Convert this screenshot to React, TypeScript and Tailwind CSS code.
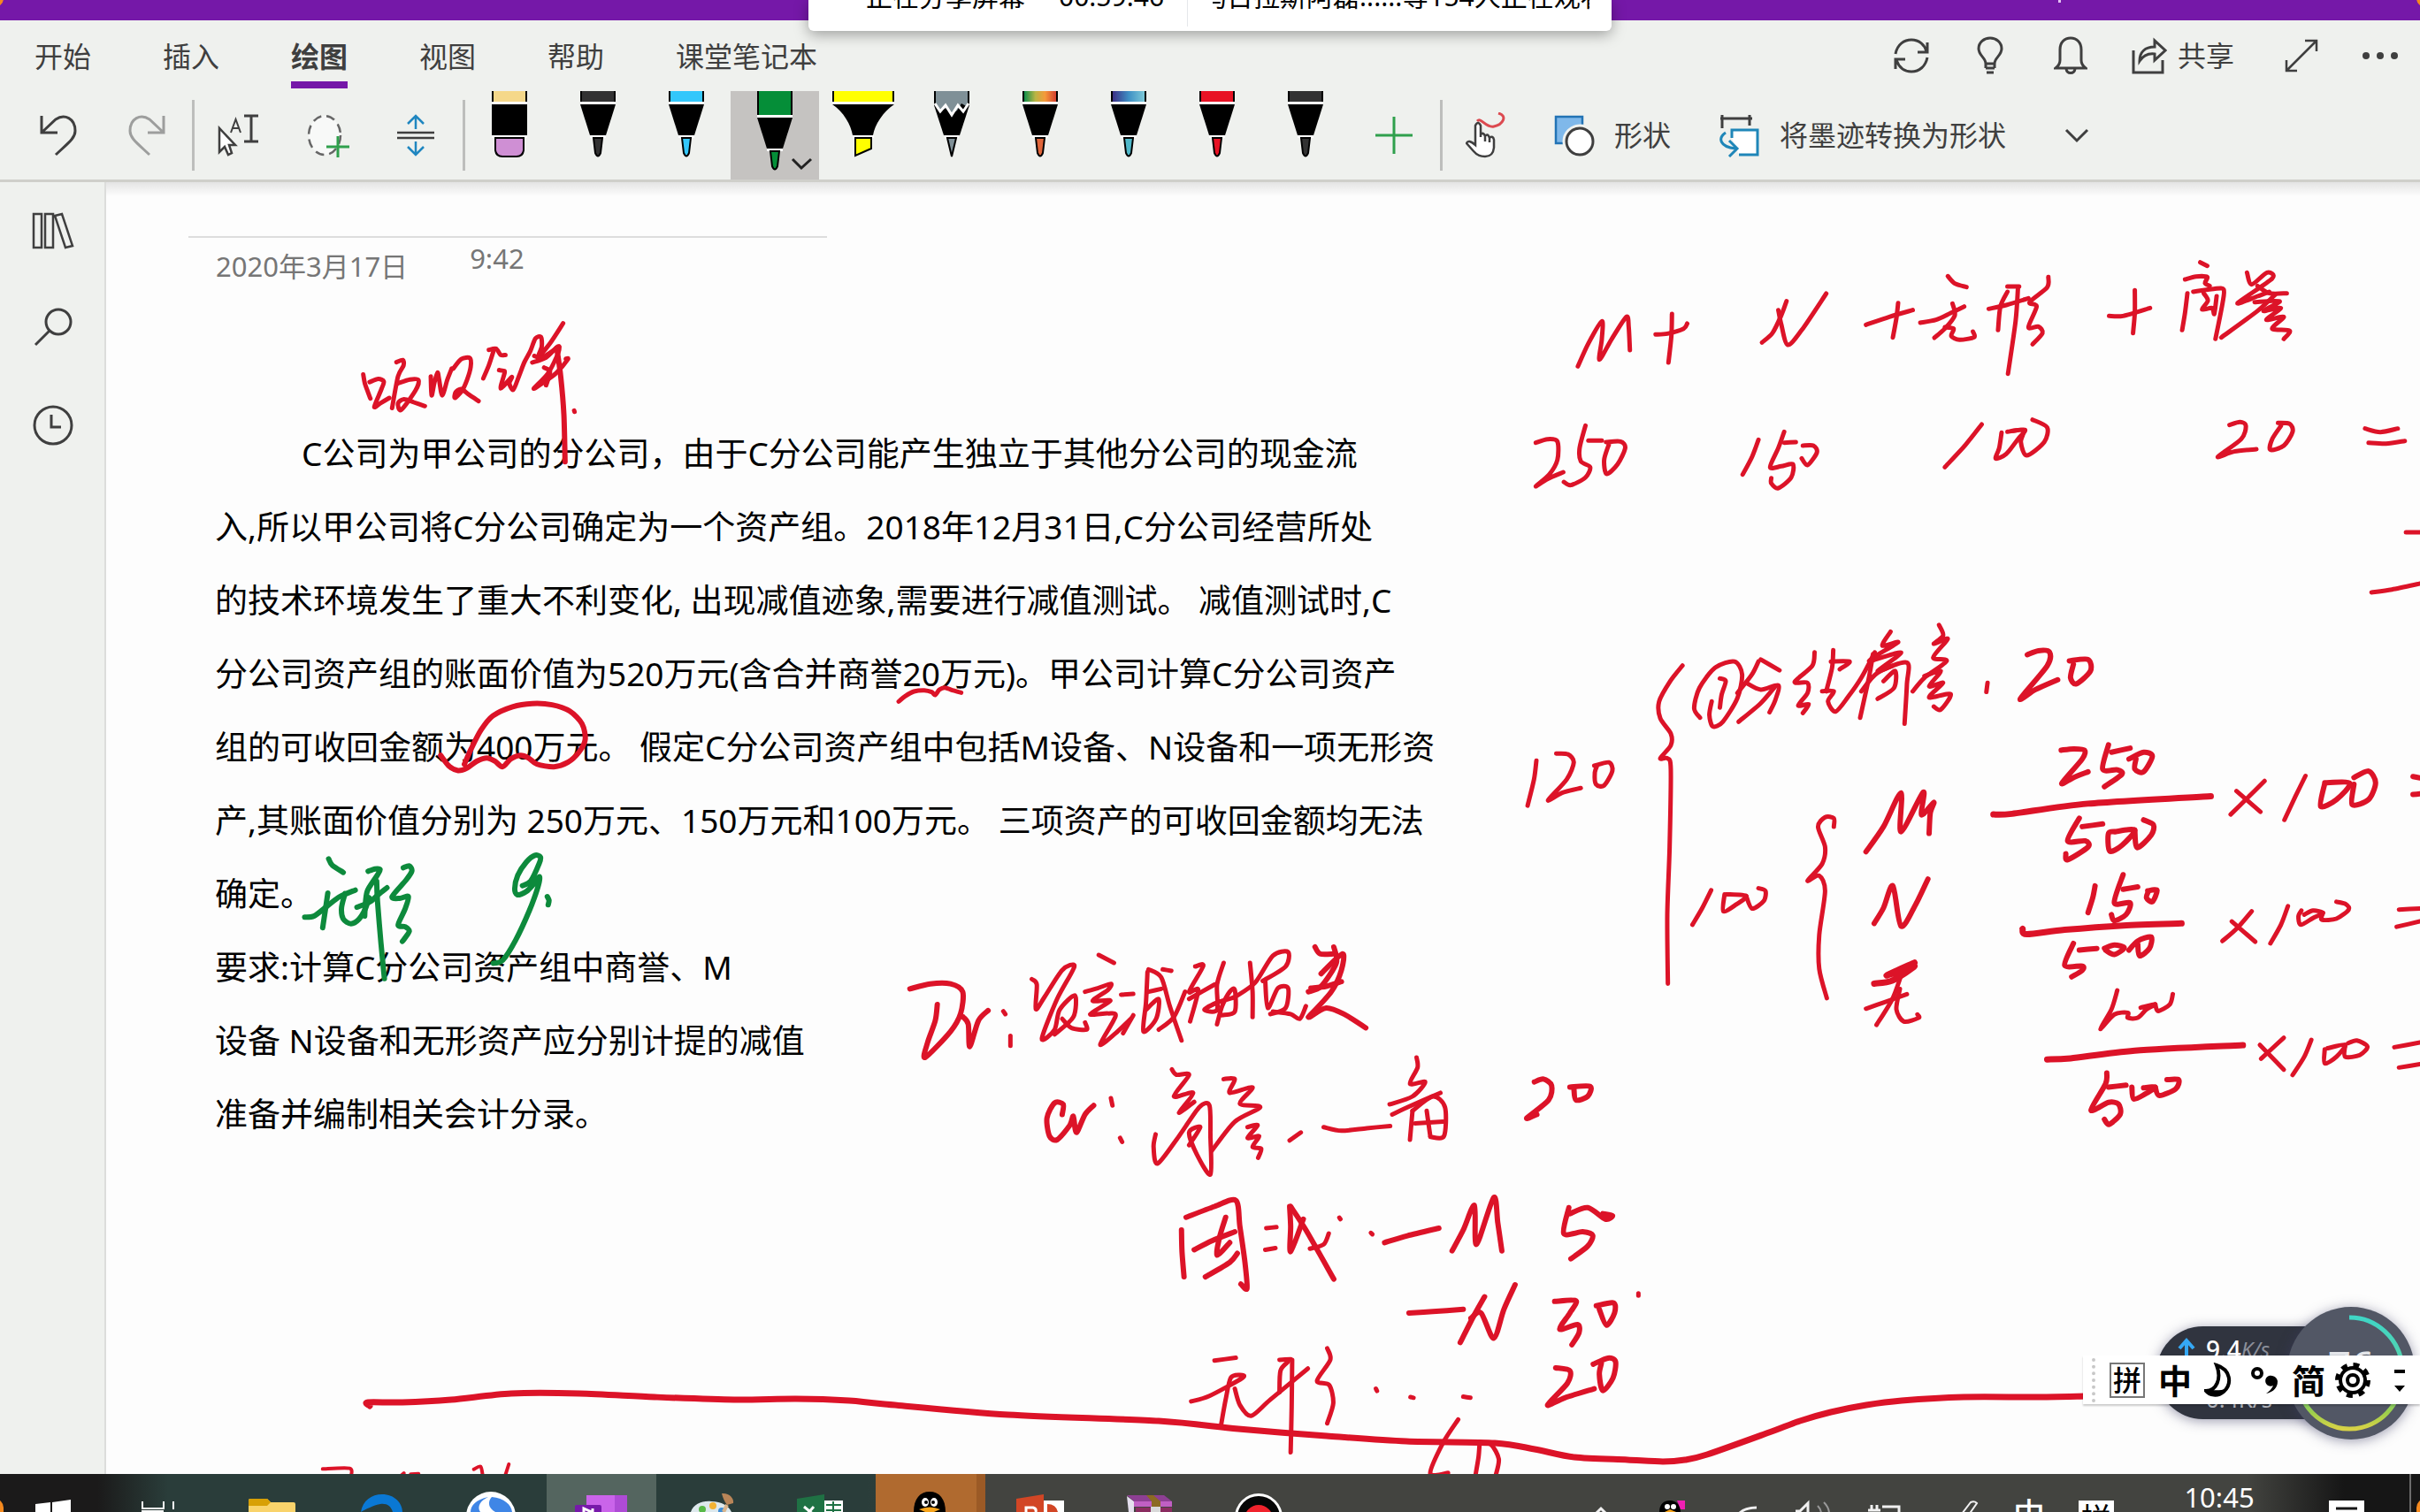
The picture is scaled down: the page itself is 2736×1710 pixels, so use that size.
import React from "react";

/* ---------- handwriting ink ---------- */

type InkGroup = {
  x: number;
  y: number;
  sx: number;
  sy: number;
  color: string;
  width: number;
  strokes: string[];
};

const RED = "#dc1328";
const GREEN = "#0d8a3c";

// Turns a list of "x,y" points into a smooth curve through every point.
function smooth(points: string): string {
  const p = points.split(" ").map((s) => s.split(",").map(Number));
  let d = `M${p[0][0]} ${p[0][1]}`;
  for (let i = 0; i < p.length - 1; i++) {
    const a = p[Math.max(i - 1, 0)];
    const b = p[i];
    const c = p[i + 1];
    const e = p[Math.min(i + 2, p.length - 1)];
    const k = 7;
    d += `C${b[0] + (c[0] - a[0]) / k} ${b[1] + (c[1] - a[1]) / k} ${c[0] - (e[0] - b[0]) / k} ${c[1] - (e[1] - b[1]) / k} ${c[0]} ${c[1]}`;
  }
  return d;
}

const ink: InkGroup[] = [
  {
    x: 200, y: 340, sx: 700 / 1568, sy: 560 / 1568, color: RED, width: 5,
    strokes: [
      "472,234 476,262 484,290 490,310",
      "488,258 510,248 524,256 518,280 500,336 515,325 538,308",
      "556,195 572,188 574,205 560,240 545,340",
      "560,262 590,250 612,252 604,285 568,346 560,325 575,312 600,322 628,334",
      "643,240 645,300 652,260 660,228 664,250 672,300 685,250 696,215",
      "700,215 720,185 742,182 744,210 735,250 722,285 704,308 706,290 720,280 740,298 764,318",
      "776,246 790,205 803,155",
      "790,156 808,152 820,172 832,172",
      "816,220 826,222 830,228 820,278 848,242 842,262 852,282 866,240 880,195 895,160 908,120 922,115 924,145 916,176 945,135 978,72",
      "900,196 935,180 965,145 966,165 940,230 904,278 925,262 960,230 990,186 985,184",
      "930,212 945,225 935,268",
      "905,175 925,180 968,145",
      "1006,348 1007,352",
    ],
  },
  {
    x: 200, y: 340, sx: 700 / 1568, sy: 560 / 1568, color: RED, width: 6,
    strokes: [
      "962,150 972,240 980,360 983,510",
      "668,1440 690,1475 712,1488 735,1480 760,1458 785,1448 805,1458 825,1476 845,1452 870,1440 890,1448 912,1468 955,1476 990,1462 1018,1430 1034,1390 1026,1340 995,1300 950,1280 900,1276 850,1286 800,1315 770,1360 745,1420 728,1468",
    ],
  },
  {
    x: 960, y: 700, sx: 1 / 3, sy: 1 / 3, color: RED, width: 5,
    strokes: ["168,280 190,262 220,246 255,242 280,248 292,258 306,240 325,233 350,242 380,250"],
  },
  {
    x: 200, y: 940, sx: 760 / 1568, sy: 1 / 3, color: GREEN, width: 6,
    strokes: [
      "354,94 362,115 388,140",
      "298,292 320,288 350,255 380,222 416,200",
      "352,210 346,270 340,328",
      "392,212 384,260 388,298 406,314 425,298 440,262 448,225",
      "446,136 462,128 474,130 468,148 445,200 440,240 438,288",
      "420,258 450,240 470,215 490,192",
      "466,170 468,240 476,380 484,500",
      "528,124 542,118 548,135 535,165 502,222 520,228 540,222 532,265 516,318 532,324 542,340 526,374",
      "806,185 825,170 845,110 848,88 835,82 815,105 795,150 788,195 794,216 815,205 835,175 846,155 842,190 822,270 790,370 760,438 738,448",
      "864,222 868,235 866,250",
    ],
  },
  {
    x: 1700, y: 280, sx: 1036 / 1568, sy: 1 / 3, color: RED, width: 5,
    strokes: [
      "127,403 145,325 168,250 168,310 164,380 185,310 210,235 214,270 216,348",
      "260,295 280,292 308,275 314,258",
      "288,225 287,300 282,390",
      "442,322 460,290 475,230 484,182",
      "470,212 475,260 486,330 510,280 552,156",
      "620,262 660,235 700,212",
      "675,188 672,240 666,305",
      "760,97 772,122 792,134",
      "713,255 740,245 765,222 788,200",
      "768,190 772,230 755,275 737,306",
      "755,270 770,275 766,300 780,313 805,304 803,285",
      "862,132 882,132",
      "830,208 860,195 898,172",
      "862,150 850,200 846,280",
      "880,140 876,250 863,428",
      "932,100 930,135 900,185 912,200 898,270 915,268 922,290 905,328",
      "1036,232 1060,232 1106,205",
      "1080,145 1080,220 1077,290",
      "1192,50 1204,62",
      "1166,108 1185,98 1204,100 1200,120 1208,130",
      "1170,155 1166,220 1161,280",
      "1180,150 1215,140 1232,142 1230,190 1218,310",
      "1198,155 1205,180 1195,210 1212,205 1216,225 1220,165",
      "1272,85 1280,125 1306,85 1315,105 1256,188 1290,165 1310,150",
      "1290,130 1310,155 1340,155",
      "1320,160 1290,215 1228,305",
      "1285,185 1328,182 1300,215 1330,205 1305,245 1335,235 1315,275 1345,282 1335,310",
      "55,662 75,650 92,658 92,720 78,770 55,810 75,785 102,762",
      "140,604 130,680 132,725 148,745 140,780 115,806 103,795",
      "145,655 168,655",
      "175,660 200,658 208,680 195,735 176,768 172,720 180,668",
      "436,652 425,710 409,770",
      "480,625 470,680 456,745 475,742 495,735 492,780 470,816 458,800 458,782",
      "480,662 500,660",
      "512,672 530,672 536,695 520,738 510,715",
      "818,600 790,670 755,745",
      "852,628 848,680 842,716 860,700 880,650 892,618 862,625",
      "870,622 890,620 885,660 895,705 925,660 930,610 905,584",
      "1242,602 1260,592 1270,605 1262,650 1222,710 1250,692 1288,684",
      "1325,595 1345,598 1350,625 1335,672 1312,686 1315,650 1330,605",
      "1474,614 1500,626 1530,614",
      "1480,662 1510,665 1542,656",
      "1544,966 1568,966",
      "1485,1170 1520,1160 1568,1140",
    ],
  },
  {
    x: 1700, y: 690, sx: 1036 / 1568, sy: 600 / 1568, color: RED, width: 5,
    strokes: [
      "306,164 285,210 266,270 268,320 286,365 286,400 268,438 280,438 286,470 284,700 280,900 281,1104",
      "56,445 52,500 41,578",
      "90,424 110,426 120,450 108,500 76,562 100,540 132,526",
      "155,460 180,450 186,475 172,518 158,515 156,480 160,460",
      "336,318 326,290 335,230 362,170 395,152 408,190 400,260 375,330 358,344 352,310 356,270",
      "370,202 380,210 373,250 370,288",
      "440,146 472,178",
      "436,152 425,190 400,245",
      "415,215 440,235 470,222 465,265 455,302",
      "465,225 440,275 402,330",
      "532,125 528,165 498,212 520,215 520,245 504,282 522,278 512,304",
      "564,118 562,170 552,240",
      "560,152 592,152 575,175",
      "545,240 565,240 555,270 568,300 590,255 612,200 635,125",
      "662,64 648,105 675,95 625,150 680,125 640,180 665,165",
      "632,130 625,200 610,318",
      "612,240 640,185 690,155 690,220 686,336",
      "650,210 670,180 668,230 640,262",
      "745,44 752,75 736,100 760,85 735,140 758,150 720,200 700,240",
      "720,195 748,180 728,225 752,215 728,258 765,248 748,294 736,285",
      "828,215 826,242",
      "1302,505 1270,560 1244,604",
      "1254,535 1295,596",
      "1372,490 1355,550 1336,620",
      "565,640 565,615 550,612 538,640 550,700 545,750 520,800 540,785 550,830 540,960 540,1060 553,1147",
      "355,828 340,880 323,930",
      "378,840 376,890 398,870 415,845 380,840",
      "415,845 425,882 445,860 448,830 436,822",
      "1280,890 1255,940 1230,978",
      "1246,920 1286,980",
      "1342,875 1330,930 1312,985",
      "1365,888 1360,905 1364,930 1385,910 1402,895 1385,888 1370,900",
      "1402,895 1400,915 1425,912 1446,885 1440,868 1425,862",
      "1532,885 1568,882",
      "1528,936 1568,920",
      "620,1178 650,1160 690,1135",
      "680,1080 665,1150 638,1226",
      "678,1120 672,1180 685,1216 710,1205 708,1195",
      "1050,1124 1040,1180 1021,1238 1045,1195 1068,1190 1068,1205 1085,1205 1100,1180 1115,1165 1090,1175",
      "1115,1165 1120,1185 1140,1165 1145,1135",
      "1335,1264 1296,1326",
      "1294,1285 1335,1358",
      "1382,1270 1370,1320 1350,1374",
      "1405,1298 1405,1340 1425,1320 1440,1285 1410,1295",
      "1440,1285 1440,1320 1465,1315 1478,1290 1460,1272 1445,1280",
      "1524,1292 1568,1278",
      "1532,1352 1568,1342",
    ],
  },
  {
    x: 1700, y: 690, sx: 1036 / 1568, sy: 600 / 1568, color: RED, width: 6,
    strokes: [
      "896,132 915,120 934,124 930,165 884,262 910,235 948,206",
      "968,150 1000,146 1004,180 980,218 970,200 975,160",
      "954,414 975,410 994,414 990,440 955,512 975,495 1000,478",
      "1035,398 1025,470 1050,472 1058,485 1028,522",
      "1040,420 1072,408",
      "1070,440 1095,420 1110,432 1095,478 1080,470 1082,440",
      "985,615 965,682 995,682 1000,700 965,738 962,720",
      "990,640 1025,632",
      "1048,655 1035,660 1037,712 1058,695 1080,650 1045,655",
      "1080,650 1084,702 1108,665 1112,635 1095,620",
      "1405,512 1398,580 1425,560 1448,512 1405,510",
      "1455,515 1452,575 1480,560 1492,510 1480,476 1455,495",
      "1556,492 1568,496",
      "1556,545 1568,543",
      "620,714 650,640 680,540 680,655 718,538 715,605 736,568 730,600 728,660",
      "634,926 650,880 666,815 680,934 705,870 726,795",
      "1012,815 1008,850 1000,894",
      "1060,782 1045,865 1072,865 1065,900 1045,918 1040,900",
      "1060,825 1085,818",
      "1102,830 1118,828 1110,862 1100,850 1103,832",
      "975,985 960,1050 990,1052 990,1065 972,1084",
      "985,1005 1015,1000",
      "1028,1000 1045,990 1062,998 1045,1018 1030,1005",
      "1070,1005 1085,978 1108,966 1105,1000 1088,1022 1085,985",
      "1032,1368 1030,1400 1005,1478 1035,1455 1052,1460 1055,1490 1036,1520 1028,1505",
      "1035,1410 1065,1404",
      "1075,1410 1078,1445 1098,1430 1115,1410 1095,1412",
      "1115,1410 1122,1435 1150,1415 1155,1388 1135,1388",
    ],
  },
  {
    x: 1700, y: 690, sx: 1036 / 1568, sy: 600 / 1568, color: RED, width: 7,
    strokes: [
      "838,604 870,602 1000,572 1210,550",
      "888,942 895,958 960,945 1060,932 1160,926",
      "930,1328 970,1325 1080,1302 1265,1286",
      "634,1104 665,1095 703,1052 655,1080 703,1042",
    ],
  },
  {
    x: 1000, y: 1040, sx: 900 / 1568, sy: 640 / 1568, color: RED, width: 5,
    strokes: [
      "234,254 238,262",
      "248,322 248,350",
      "290,165 300,180 298,248 315,215 350,140 374,130 340,220 310,330 335,305 345,250 375,210 372,270 335,318",
      "350,275 368,300 398,305 395,285",
      "422,98 452,120",
      "395,200 420,190 446,178 440,195 410,225 445,225 405,262 440,260 455,268 425,346 455,315 485,275",
      "466,208 490,206",
      "470,315 490,265",
      "518,145 515,230 510,310 535,275 540,220 515,250",
      "520,138 545,160 562,240 585,335",
      "520,200 545,192",
      "592,200 570,270 540,305",
      "548,138 565,142",
      "612,130 628,128 600,200 618,195 602,282",
      "600,220 650,180",
      "668,120 655,180 655,250 630,250 655,230 690,215",
      "655,290 665,240 680,200 690,195 690,255 665,265",
      "720,120 725,200 725,270",
      "690,215 730,175 765,100 795,90 790,130 745,170",
      "750,170 755,245 775,190 795,190 790,245 760,262",
      "765,255 800,262 818,275 830,240",
      "446,495 449,515",
      "464,605 468,616",
      "566,415 575,430 600,430 570,490 608,480 580,535 610,505",
      "534,595 530,630 538,676 580,600 620,520 640,515 642,600 642,706 615,650 600,590 622,575 600,625",
      "668,442 690,442 680,480 725,465 700,510 740,520 690,560 645,640",
      "715,575 735,570 715,605 738,600 725,630 742,635 736,660",
      "798,612 820,590",
      "865,575 900,585 950,578 996,572",
      "1048,382 1050,410 1035,455 1065,450 1040,490 995,512",
      "1000,540 1030,520 1095,480",
      "1040,530 1035,610",
      "1040,530 1080,490 1104,520 1102,600 1075,602",
      "1068,530 1075,600",
      "1045,565 1100,560",
      "752,855 772,852",
      "750,915 770,910",
      "838,912 865,900 875,870",
      "896,826 898,830",
      "958,868 961,872",
      "1485,1036 1485,1042",
      "650,1222 692,1214",
      "604,1335 640,1320 705,1270 700,1262 682,1270 672,1330 663,1400",
      "690,1300 700,1345 722,1375 760,1330 834,1244",
      "778,1220 800,1218",
      "795,1225 780,1250 778,1310",
      "803,1220 802,1350 800,1476",
      "872,1188 878,1220 852,1278 876,1290 884,1340 872,1396",
      "968,1300 970,1306",
      "1036,1323 1042,1325",
      "1140,1322 1154,1325",
      "1130,1385 1100,1450 1075,1535 1110,1533",
      "1172,1455 1170,1490 1164,1540",
      "1172,1448 1195,1455 1210,1495 1204,1540",
    ],
  },
  {
    x: 1000, y: 1040, sx: 900 / 1568, sy: 640 / 1568, color: RED, width: 6,
    strokes: [
      "50,192 90,178 130,178 154,200 150,260 130,310 80,382 85,340 100,280 104,235",
      "155,270 165,290 168,352 185,280 204,252",
      "848,76 858,95 885,95",
      "885,76 890,120 860,185 835,200",
      "860,150 902,95 900,140 880,200 835,270",
      "838,270 870,245 905,262 948,300",
      "840,190 870,185 900,172",
      "350,540 352,512 335,508 320,550 325,600 340,610 365,570 372,545 378,590 395,540 412,515",
      "1280,450 1298,442 1314,460 1308,500 1265,550 1285,540",
      "1350,464 1390,462 1385,490 1362,500 1358,470",
      "585,860 586,920 590,990",
      "594,825 650,795 692,778 700,850 710,950 714,1022 702,1010",
      "610,915 645,890 690,865",
      "672,825 660,880 655,930 680,895",
      "695,925 680,950 632,990",
      "798,795 800,850 800,920 825,830",
      "800,795 830,860 885,996",
      "985,895 1030,876 1092,855",
      "1118,918 1140,860 1162,792 1166,900 1200,770 1208,840 1216,918",
      "1348,798 1338,870 1375,865 1395,875 1385,905 1352,940",
      "1350,815 1385,798 1420,830 1434,820 1415,815",
      "1033,1090 1080,1086 1140,1080",
      "1134,1172 1160,1100 1182,1045",
      "1155,1105 1175,1090 1200,1160 1220,1080 1242,1012",
      "1320,1058 1362,1056 1350,1090 1330,1135 1365,1122 1368,1145 1354,1178",
      "1402,1070 1436,1062 1438,1090 1422,1124 1408,1080",
      "1322,1242 1350,1250 1345,1285 1306,1345 1340,1325 1398,1300",
      "1396,1232 1425,1215 1440,1225 1435,1270 1415,1305 1408,1260 1412,1230",
    ],
  },
  {
    x: 0, y: 0, sx: 1, sy: 1, color: RED, width: 7,
    strokes: [
      "418,1590 416,1586 455,1586 510,1583 578,1576 655,1576 740,1580 830,1583 900,1582 960,1584 1000,1588 1140,1600 1310,1607 1400,1616 1500,1624 1590,1630 1690,1632 1735,1639 1780,1648 1840,1651 1880,1653 1905,1651 1930,1645 2000,1620 2035,1607 2070,1597 2110,1589 2150,1584 2220,1580 2300,1580 2358,1579",
    ],
  },
  {
    x: 0, y: 1480, sx: 1000 / 1568, sy: 1 / 3, color: RED, width: 4,
    strokes: ["572,544 620,542 622,570", "710,568 716,558", "728,562 742,560", "840,545 852,536 856,570", "902,528 895,570"],
  },
];

function InkLayer() {
  return (
    <svg className="pointer-events-none absolute left-0 top-0 h-[1461px] w-[2616px]" viewBox="120 206 2616 1461" fill="none" aria-hidden="true">
      {ink.map((g, i) => (
        <g key={i} transform={`translate(${g.x} ${g.y}) scale(${g.sx} ${g.sy})`} stroke={g.color} strokeWidth={g.width} strokeLinecap="round" strokeLinejoin="round">
          {g.strokes.map((s, j) => (
            <path key={j} d={smooth(s)} vectorEffect="non-scaling-stroke" />
          ))}
        </g>
      ))}
    </svg>
  );
}

/* ---------- ribbon ---------- */

const tabs = ["开始", "插入", "绘图", "视图", "帮助", "课堂笔记本"];

function Icon({ w, h, children, label, sw = 3 }: { w: number; h: number; children: React.ReactNode; label?: string; sw?: number }) {
  return (
    <svg width={w} height={h} viewBox={`0 0 ${w} ${h}`} fill="none" stroke="#3f3f3f" strokeWidth={sw} aria-label={label} aria-hidden={label ? undefined : true} className="shrink-0">
      {children}
    </svg>
  );
}

function TopActions() {
  const btn = "flex items-center justify-center";
  return (
    <div className="ml-auto flex items-center pr-6">
      <button className={btn} aria-label="同步">
        <Icon w={42} h={42}>
          <path d="M3 19C5 8 13 3 21 3C30 3 36 9 38 16M39 6V17H28M39 23C37 33 30 39 21 39C12 39 7 34 4 26M3 36V25H14" />
        </Icon>
      </button>
      <button className={btn + " ml-[52px]"} aria-label="操作说明">
        <Icon w={32} h={44}>
          <path d="M11 31C11 24 3 22 3 14C3 7 9 2 16 2S29 7 29 14C29 22 21 24 21 31ZM11 36H21M12 41H20M11 31V36M21 31V36" />
        </Icon>
      </button>
      <button className={btn + " ml-[56px]"} aria-label="通知">
        <Icon w={38} h={44}>
          <path d="M2 36C6 33 7 31 7 27V15C7 7 12 2 19 2S31 7 31 15V27C31 31 32 33 36 36ZM14 37C15 43 23 43 24 37" />
        </Icon>
      </button>
      <button className="ml-[50px] flex items-center gap-3 text-[32px] leading-10">
        <Icon w={40} h={42}>
          <path d="M2 15V40H35V26M9 27C9 17 15 11 26 11V4L38 15L26 26V19C18 18 13 21 9 27Z" />
        </Icon>
        共享
      </button>
      <button className={btn + " ml-[56px]"} aria-label="全屏">
        <Icon w={40} h={40}>
          <path d="M3 37L37 3M24 3H37V15M3 25V37H15" strokeWidth="2.5" />
        </Icon>
      </button>
      <button className={btn + " ml-[48px]"} aria-label="更多">
        <Icon w={42} h={10}>
          <g fill="#3f3f3f" stroke="none">
            <circle cx="5" cy="5" r="4" />
            <circle cx="21" cy="5" r="4" />
            <circle cx="37" cy="5" r="4" />
          </g>
        </Icon>
      </button>
    </div>
  );
}

type PenSpec = { name: string; fill: string; tip?: string; kind?: "eraser" | "highlighter" | "pencil"; selected?: boolean };

const pens: PenSpec[] = [
  { name: "橡皮擦", fill: "#f5d88a", kind: "eraser" },
  { name: "黑色笔", fill: "#323232" },
  { name: "蓝色笔", fill: "#33c7fb" },
  { name: "绿色笔", fill: "#058e38", selected: true },
  { name: "黄色荧光笔", fill: "#ffff00", kind: "highlighter" },
  { name: "铅笔", fill: "#7f9097", kind: "pencil" },
  { name: "彩虹笔", fill: "url(#rainbow)", tip: "#e0653a" },
  { name: "星系笔", fill: "url(#galaxy)", tip: "#4fb8c9" },
  { name: "红色笔", fill: "#e81224" },
  { name: "黑色粗笔", fill: "#323232" },
];

function Pen({ pen }: { pen: PenSpec }) {
  const tip = pen.tip ?? pen.fill;
  let drawing: React.ReactNode;
  if (pen.kind === "eraser") {
    drawing = (
      <>
        <path d="M30 0H70V12H30Z" fill="#000" />
        <path d="M32 0H68V12H32Z" fill={pen.fill} />
        <path d="M30 12H70V15H30ZM30 50H70V53H30Z" fill="#fff" />
        <path d="M30 15H70V50H30Z" fill="#000" />
        <path d="M34 53H66V67Q65 74 58 74H42Q35 74 34 67Z" fill="#cf8fd4" stroke="#000" strokeWidth="2" />
      </>
    );
  } else if (pen.kind === "highlighter") {
    drawing = (
      <>
        <path d="M15 0H85V12H15Z" fill="#000" />
        <path d="M17 0H83V12H17Z" fill={pen.fill} />
        <path d="M15 12H85V15H15ZM38 50H62V53H38Z" fill="#fff" />
        <path d="M15 15H85C72 24 63 38 61 50H38C36 38 28 24 15 15Z" fill="#000" />
        <path d="M41 53H59V65L41 73Z" fill={pen.fill} stroke="#000" strokeWidth="2" />
      </>
    );
  } else if (pen.kind === "pencil") {
    drawing = (
      <>
        <path d="M30 0H70V16L59 50H41L30 16Z" fill="#000" />
        <path d="M32 0H68V18L61 14L56 22L50 26L44 19L38 22L32 16Z" fill={pen.fill} />
        <path d="M31 14L37 23L43 16L50 27L57 16L63 23L69 14" fill="none" stroke="#fff" strokeWidth="3" />
        <path d="M42 50H58V53H42Z" fill="#fff" />
        <path d="M45 53H55L50 74Z" fill={pen.fill} stroke="#000" strokeWidth="2" />
      </>
    );
  } else {
    drawing = (
      <>
        {pen.selected && (
          <>
            <path d="M30 0H70V15H30Z" fill="#000" />
            <path d="M32 0H68V15H32Z" fill={pen.fill} />
          </>
        )}
        <g transform={pen.selected ? "translate(0 15)" : undefined}>
          <path d="M30 0H70V12H30Z" fill="#000" />
          <path d="M32 0H68V12H32Z" fill={pen.fill} />
          <path d="M30 12H70V15H30ZM41 50H59V53H41Z" fill="#fff" />
          <path d="M30 15H70L59 50H41Z" fill="#000" />
          <path d="M45 53H55L53 70Q50 77 47 70Z" fill={tip} stroke="#000" strokeWidth="2" />
        </g>
        {pen.selected && <path d="M70 77L80 87L91 77" fill="none" stroke="#222" strokeWidth="3" />}
      </>
    );
  }
  return (
    <button aria-label={pen.name} aria-pressed={!!pen.selected} className={pen.selected ? "w-[100px] shrink-0 bg-[#c5c3c1]" : "w-[100px] shrink-0"}>
      <svg viewBox="0 0 100 100" className="block h-[100px] w-[100px]">
        <defs>
          <linearGradient id="rainbow">
            <stop offset="0" stopColor="#0f8f4b" />
            <stop offset="0.35" stopColor="#b9b544" />
            <stop offset="0.65" stopColor="#f59a3a" />
            <stop offset="1" stopColor="#d5402f" />
          </linearGradient>
          <linearGradient id="galaxy">
            <stop offset="0" stopColor="#3b2f86" />
            <stop offset="0.5" stopColor="#3f8fc4" />
            <stop offset="1" stopColor="#7cc9d8" />
          </linearGradient>
        </defs>
        {drawing}
      </svg>
    </button>
  );
}

function Separator({ className }: { className: string }) {
  return <div className={"mt-[10px] h-20 w-[3px] shrink-0 bg-[#bdbebc] " + className} />;
}

function Toolbar() {
  const cell = "flex h-[100px] w-[100px] shrink-0 items-center justify-center";
  return (
    <div className="flex h-[100px] pl-4">
      <button className={cell} aria-label="撤消">
        <Icon w={44} h={50}>
          <path d="M3 3V22H21M3 22L19 7C29 0 41 6 41 20C41 28 34 33 19 47" />
        </Icon>
      </button>
      <button className={cell} aria-label="恢复">
        <Icon w={44} h={50}>
          <path d="M41 3V22H23M41 22L25 7C15 0 3 6 3 20C3 28 10 33 25 47" stroke="#9d9e9d" />
        </Icon>
      </button>
      <Separator className="ml-px" />
      <button className={cell} aria-label="选择对象或键入文本">
        <Icon w={48} h={50} sw={2}>
          <path d="M2 17V44L8 38L12 47L16 45L13 36H20Z" fill="#fff" strokeWidth="2.5" />
          <path d="M15 22L20.500 7L26 22M17 17H24" />
          <path d="M30 3H46M30 32H46M38 3V32" strokeWidth="3" />
        </Icon>
      </button>
      <button className={cell} aria-label="套索选择">
        <Icon w={50} h={52}>
          <ellipse cx="22" cy="26" rx="18" ry="22" strokeDasharray="10 6" stroke="#666" fill="#f8f9f8" strokeWidth="2.500" />
          <path d="M24 39H50M37 27V51" stroke="#2fa04c" />
        </Icon>
      </button>
      <button className={cell} aria-label="插入空间">
        <Icon w={44} h={50}>
          <path d="M1 22H43M1 28H43" strokeWidth="2.500" />
          <path d="M22 18V3M13 12L22 3L31 12M22 32V47M13 38L22 47L31 38" stroke="#1f86c0" strokeWidth="2.500" />
        </Icon>
      </button>
      <Separator className="ml-[3px]" />
      {pens.map((p) => (
        <Pen key={p.name} pen={p} />
      ))}
      <button className={cell} aria-label="添加笔">
        <Icon w={44} h={44}>
          <path d="M1 22H43M22 1V43" stroke="#2fa04c" />
        </Icon>
      </button>
      <Separator className="ml-[2px]" />
      <button className={cell} aria-label="使用触摸绘图">
        <Icon w={48} h={52}>
          <path d="M13 10C18 5 22 18 32 16C42 14 48 4 37 1" stroke="#dc4a50" />
          <path d="M11 37V15Q14 9 17 15V28V25Q20 22 22 27Q25 23 27 29Q31 26 32 31V40Q31 50 22 50Q14 50 9 44L1 35Q3 30 11 37ZM22 27V33M27 29V34" fill="#fff" strokeWidth="2.500" />
        </Icon>
      </button>
      <button className="ml-[26px] flex shrink-0 items-center gap-[22px] text-[32px] leading-10">
        <Icon w={46} h={50}>
          <path d="M2 4H32V34H2Z" fill="#7fb8ea" stroke="#2273b5" strokeWidth="2.500" />
          <circle cx="29" cy="32" r="18" fill="#f0f2ef" stroke="#f0f2ef" />
          <circle cx="29" cy="32" r="15" fill="#fff" />
        </Icon>
        形状
      </button>
      <button className="ml-[53px] flex shrink-0 items-center gap-[22px] text-[32px] leading-10">
        <Icon w={48} h={50}>
          <path d="M3 6H39M5 2V17M36 2V14" />
          <path d="M16 28V19H45V47H24" fill="#fff" stroke="#1f86b8" />
          <path d="M9 22C0 28 2 38 20 40M13 31L22 40L13 49" stroke="#1f86b8" />
        </Icon>
        将墨迹转换为形状
      </button>
      <button className="ml-[60px] flex w-[40px] shrink-0 items-center justify-center" aria-label="更多选项">
        <Icon w={30} h={20}>
          <path d="M3 4L15 16L27 4" />
        </Icon>
      </button>
    </div>
  );
}

function SharingBar() {
  return (
    <div className="absolute left-1/3 top-0 z-20 ml-[2px] h-[35px] w-[908px] overflow-hidden rounded-b-md bg-white text-black shadow-[0_4px_16px_rgba(0,0,0,0.35)]">
      <div className="-mt-[26px] flex h-11 items-center whitespace-nowrap pl-[65px] text-[30px] leading-[44px]">
        <span>正在分享屏幕</span>
        <span className="ml-[38px]">00:59:46</span>
        <span className="ml-[26px] mt-6 h-11 w-px bg-gray-200" />
        <span className="ml-[28px] flex w-[426px] justify-start overflow-hidden">
          <span className="-ml-[14px]">乌日拉斯阿磊......等154人正在观看</span>
        </span>
      </div>
    </div>
  );
}

/* ---------- note ---------- */

const paragraph = [
  "入,所以甲公司将C分公司确定为一个资产组。2018年12月31日,C分公司经营所处",
  "的技术环境发生了重大不利变化, 出现减值迹象,需要进行减值测试。 减值测试时,C",
  "分公司资产组的账面价值为520万元(含合并商誉20万元)。甲公司计算C分公司资产",
  "组的可收回金额为400万元。 假定C分公司资产组中包括M设备、N设备和一项无形资",
  "产,其账面价值分别为 250万元、150万元和100万元。 三项资产的可收回金额均无法",
  "确定。",
  "要求:计算C分公司资产组中商誉、M",
  "设备 N设备和无形资产应分别计提的减值",
  "准备并编制相关会计分录。",
];

function Note() {
  return (
    <main className="relative flex-1 overflow-hidden bg-[#fdfdfd]">
      <div className="absolute inset-x-0 top-0 h-4 bg-gradient-to-b from-black/10 to-transparent" />
      <div className="ml-[93px] mt-[61px] w-[722px] border-t-2 border-[#dddddd]" />
      <div className="ml-[124px] flex text-[31px] leading-9 text-[#767676]">
        <span className="pt-[14px]">2020年3月17日</span>
        <span className="ml-[70px] pt-[5px]">9:42</span>
      </div>
      <article className="ml-[123px] mt-[152px] whitespace-nowrap text-[37px] leading-[83px] text-black">
        <p className="pl-[98px]">C公司为甲公司的分公司，由于C分公司能产生独立于其他分公司的现金流</p>
        {paragraph.map((line) => (
          <p key={line}>{line}</p>
        ))}
      </article>
      <InkLayer />
      <SpeedWidget />
    </main>
  );
}

function SpeedWidget() {
  return (
    <>
      <div className="absolute bottom-[39px] right-[6px] h-[150px] w-[292px]">
        <div className="absolute left-0 top-[22px] h-[105px] w-[240px] overflow-hidden rounded-full bg-[#30343f] shadow-[0_2px_14px_rgba(60,60,100,0.5)]">
          <div className="flex items-center pl-6 pt-2 text-[28px] leading-9 text-white">
            <svg viewBox="0 0 20 26" className="mr-3 h-[26px] w-5" fill="none" stroke="#35a8f5" strokeWidth="4">
              <path d="M10 26V4M2 12L10 3L18 12" />
            </svg>
            <b className="font-medium">9.4</b>
            <i className="text-[24px] text-[#8b8f9a]">K/s</i>
          </div>
          <div className="mt-5 pl-14 text-[26px] leading-9 text-[#b9bcc4]">0.4K/s</div>
        </div>
        <div className="absolute right-0 top-0 flex h-[150px] w-[144px] justify-center rounded-full bg-[#525765] pt-10 text-[46px] leading-[52px] text-[#e4e6ea] shadow-[0_2px_14px_rgba(60,60,100,0.5)]">
          76
          <svg viewBox="0 0 144 150" className="absolute inset-0 h-full w-full" fill="none" strokeWidth="5">
            <defs>
              <linearGradient id="meter" x1="0" y1="0" x2="0" y2="1">
                <stop offset="0" stopColor="#3fd6c6" />
                <stop offset="0.6" stopColor="#5fd0a0" />
                <stop offset="0.85" stopColor="#9bcf4c" />
                <stop offset="1" stopColor="#d8d246" />
              </linearGradient>
            </defs>
            <path d="M70 12A60 63 0 1 1 14 96" stroke="url(#meter)" />
          </svg>
        </div>
      </div>
      <div className="absolute bottom-[79px] right-0 flex h-[55px] w-[381px] items-center bg-white pl-[10px] text-[38px] font-bold leading-[46px] text-black shadow-[0_2px_2px_rgba(0,0,0,0.2)]">
        <span className="mr-4 h-[50px] border-l-4 border-dotted border-[#c8c8c8]" />
        <button className="mr-[14px] flex h-10 w-10 items-center justify-center border-2 border-[#777] text-[32px] font-medium leading-9">拼</button>
        <button className="mr-[13px] w-[40px]">中</button>
        <button aria-label="半角" className="mr-[20px]">
          <svg viewBox="0 0 32 40" className="h-10 w-8">
            <path d="M14 3C30 8 32 24 22 33C15 39 6 37 2 32C14 32 20 18 14 3Z" fill="none" stroke="#000" strokeWidth="4" />
            <path d="M2 32C10 39 20 37 25 29C18 33 9 30 2 32Z" />
          </svg>
        </button>
        <button aria-label="中文标点" className="mr-[14px]">
          <svg viewBox="0 0 32 40" className="h-10 w-8">
            <circle cx="8" cy="12" r="5" fill="none" stroke="#000" strokeWidth="4" />
            <path d="M25 15A6 6 0 1 0 26 26Q24 31 18 35Q31 32 31 21Q30 16 25 15Z" />
          </svg>
        </button>
        <button className="mr-[8px] w-[40px]">简</button>
        <button aria-label="设置">
          <svg viewBox="0 0 44 44" className="h-11 w-11" fill="none" stroke="#000">
            <circle cx="22" cy="22" r="14" strokeWidth="4" />
            <circle cx="22" cy="22" r="17.500" strokeWidth="5" strokeDasharray="6.870 6.870" />
            <circle cx="22" cy="22" r="6" strokeWidth="4" />
          </svg>
        </button>
        <button aria-label="选项" className="ml-[24px]">
          <svg viewBox="0 0 14 28" className="h-7 w-[14px]">
            <path d="M1 2H13V6H1ZM1 20H13L7 27Z" />
          </svg>
        </button>
      </div>
    </>
  );
}

/* ---------- taskbar ---------- */

const apps: { name: string; tile?: string; art: React.ReactNode }[] = [
  {
    name: "任务视图",
    art: <path d="M39 31V39H63V31M74 31V40M38 42H63" fill="none" stroke="#fff" strokeWidth="2" />,
  },
  {
    name: "文件资源管理器",
    art: (
      <>
        <path d="M35 30Q35 28 37 28H56L60 32H86Q88 32 88 34V43H35Z" fill="#f9d36b" />
        <path d="M35 30Q35 28 37 28H56L60 32L56 36H35Z" fill="#d8a005" />
      </>
    ),
  },
  {
    name: "Edge",
    art: (
      <>
        <path d="M38 43C40 30 50 23 62 23C76 23 85 33 85 43H74C72 36 67 33 60 34C50 36 44 40 38 43Z" fill="#0a78d4" />
        <path d="M50 43C52 38 58 36 64 37C58 39 55 41 54 43Z" fill="#2a3d3a" />
      </>
    ),
  },
  {
    name: "搜狗浏览器",
    art: (
      <>
        <circle cx="61" cy="48" r="28" fill="#fff" />
        <path d="M58 26C44 29 38 36 38 43H49C45 37 49 30 58 26Z" fill="#3f86e6" />
        <path d="M62 26C76 27 84 35 85 43H66C58 39 57 31 62 26Z" fill="#3f86e6" />
      </>
    ),
  },
  {
    name: "OneNote",
    tile: "bg-[#54655f]",
    art: (
      <>
        <path d="M45 24H91V43H45Z" fill="#ca64ea" />
        <path d="M77 24H91V43H77Z" fill="#ae4bd5" />
        <path d="M32 37Q32 35 34 35H60Q62 35 62 37V43H32Z" fill="#7719aa" />
        <path d="M42 43V39L51 43M52 39V43" fill="none" stroke="#fff" strokeWidth="3" />
      </>
    ),
  },
  {
    name: "画图",
    art: (
      <>
        <path d="M39 43C42 34 52 30 62 31C74 31 82 36 85 43Z" fill="#dde8ec" />
        <circle cx="52" cy="40" r="4" fill="#58b947" />
        <circle cx="64" cy="36" r="4" fill="#f2b233" />
        <circle cx="74" cy="42" r="4" fill="#3f8fd8" />
        <path d="M74 22C82 21 88 27 87 33L80 35Q76 30 74 22Z" fill="#b98558" />
        <path d="M80 35L76 43" stroke="#d9b48b" strokeWidth="4" />
      </>
    ),
  },
  {
    name: "Excel",
    art: (
      <>
        <path d="M66 30H87V43H66Z" fill="#fff" />
        <path d="M35 28L66 23V43H35Z" fill="#1f7244" />
        <path d="M68 35H85M68 41H85M76 31V43" stroke="#1f7244" strokeWidth="2" />
        <path d="M43 37L54 46M54 37L46 46" stroke="#fff" strokeWidth="3" />
      </>
    ),
  },
  {
    name: "QQ",
    tile: "bg-[#b06a2f] border-r-[10px] border-[#9b5a26]",
    art: (
      <>
        <path d="M43 43C43 28 50 20 61 20S79 28 79 43Z" fill="#000" />
        <ellipse cx="56" cy="32" rx="4" ry="5" fill="#fff" />
        <ellipse cx="66" cy="32" rx="4" ry="5" fill="#fff" />
        <circle cx="57" cy="32" r="2" fill="#000" />
        <circle cx="65" cy="32" r="2" fill="#000" />
        <path d="M49 40Q61 35 73 40L66 43H56Z" fill="#f7a41b" />
      </>
    ),
  },
  {
    name: "PowerPoint",
    art: (
      <>
        <path d="M66 30H89V43H66Z" fill="#fff" />
        <path d="M35 28L66 23V43H35Z" fill="#d24625" />
        <path d="M46 43V38H54Q58 39 57 43" fill="none" stroke="#fff" strokeWidth="3" />
        <path d="M70 34Q80 34 82 43H70Z" fill="#d24625" />
      </>
    ),
  },
  {
    name: "WinRAR",
    art: (
      <>
        <path d="M36 25L44 31V43H38Z" fill="#e5e0ee" />
        <path d="M36 24H78L87 31H44Z" fill="#8d3f93" />
        <path d="M44 31H87V37H44Z" fill="#c05fc4" />
        <path d="M46 38H87V43H46Z" fill="#8a2c60" />
        <path d="M58 24H66L74 31V43H64V31Z" fill="#8c6a23" />
        <path d="M63 37H74V43H63Z" fill="#d8d8d8" />
      </>
    ),
  },
  {
    name: "录屏",
    art: (
      <>
        <circle cx="61" cy="49" r="27" fill="#fff" />
        <circle cx="61" cy="49" r="24" fill="#060606" />
        <circle cx="61" cy="51" r="16" fill="#f0232c" />
      </>
    ),
  },
];

function TrayIcon({ name, children }: { name: string; children: React.ReactNode }) {
  return (
    <button aria-label={name} className="w-20 shrink-0">
      <svg viewBox="0 0 80 43" className="block h-[43px] w-20" fill="none" stroke="#f0f0f0" strokeWidth="3">
        {children}
      </svg>
    </button>
  );
}

function Taskbar() {
  return (
    <footer className="relative flex h-[43px] overflow-hidden bg-[linear-gradient(90deg,#1b1a1a_0,#1b1a1a_110px,#2a3d3a_190px,#2a3d3a_980px,#434440_1120px,#434440_2540px,#161616_2650px)] text-white">
      <button aria-label="开始" className="w-[122px] shrink-0">
        <svg viewBox="0 0 122 43" className="block h-[43px] w-full">
          <path d="M40 34L57 32V43H40ZM59 32L80 29V43H59Z" fill="#fff" />
        </svg>
      </button>
      {apps.map((a) => (
        <button key={a.name} aria-label={a.name} className={"w-[124px] shrink-0 " + (a.tile ?? "")}>
          <svg viewBox="0 0 124 43" className="block h-[43px] w-[124px]">
            {a.art}
          </svg>
        </button>
      ))}
      <div className="ml-auto flex">
        <TrayIcon name="显示隐藏的图标">
          <path d="M34 45L40 39L46 45" />
        </TrayIcon>
        <TrayIcon name="QQ 消息">
          <path d="M26 43C26 34 31 30 38 30S50 35 50 43Z" fill="#000" stroke="none" />
          <path d="M46 30L55 30V40H50Z" fill="#f01fb4" stroke="none" />
          <circle cx="35" cy="37" r="3" fill="#fff" stroke="none" />
          <circle cx="42" cy="37" r="3" fill="#fff" stroke="none" />
          <path d="M32 43L38 40L45 43Z" fill="#f7a41b" stroke="none" />
        </TrayIcon>
        <TrayIcon name="网络">
          <path d="M36 45Q42 38 56 38" />
        </TrayIcon>
        <TrayIcon name="音量">
          <path d="M20 42H25L34 33V45" />
          <path d="M45 36Q49 40 49 45M52 32Q58 38 58 45" stroke="#999" strokeWidth="2" />
        </TrayIcon>
        <TrayIcon name="电源">
          <path d="M22 41H36M26 35V41M32 35V41M38 37H57V45" />
        </TrayIcon>
        <TrayIcon name="墨迹">
          <path d="M48 45L58 32Q62 30 65 33L56 46" strokeWidth="2" />
        </TrayIcon>
        <button className="w-20 shrink-0 pl-2 pt-[24px] text-[36px] font-medium leading-[44px]">中</button>
        <button className="flex w-20 shrink-0 justify-center pt-[30px] text-[34px] leading-10 text-black">
          <span className="h-10 w-10 bg-white">拼</span>
        </button>
        <time className="w-[198px] shrink-0 pt-[6px] text-center text-[31px] leading-10">10:45</time>
        <button aria-label="操作中心" className="mr-[26px] w-[90px] shrink-0">
          <svg viewBox="0 0 90 43" className="block h-[43px] w-[90px]">
            <path d="M25 30H65V43H25Z" fill="#fff" />
            <path d="M33 39H57" stroke="#161616" strokeWidth="3" />
          </svg>
        </button>
        <button aria-label="显示桌面" className="w-3 shrink-0 border-l-2 border-[#6c6c6c]" />
      </div>
      <span className="absolute -left-4 top-7 h-[30px] w-5 rounded-full bg-[#f58a1f]" />
      <span className="absolute -right-4 top-7 h-[30px] w-5 rounded-full bg-[#f58a1f]" />
    </footer>
  );
}

export default function App() {
  return (
    <div className="relative flex min-h-screen flex-col overflow-hidden bg-[#eff1ee] font-['Noto_Sans','Noto_Sans_CJK_SC',sans-serif] text-[#3f3f3f]">
      <div className="relative h-[23px] overflow-hidden bg-[#7518a8]">
        <span className="absolute -left-4 -top-5 h-7 w-5 rounded-full bg-[#f58a1f]" />
        <span className="absolute -right-4 -top-5 h-7 w-5 rounded-full bg-[#f58a1f]" />
        <span className="absolute right-[406px] top-0 h-[3px] w-[3px] bg-[#e3c4f2]" />
      </div>
      <SharingBar />
      <header className="relative z-10 border-b-[3px] border-[#cfcfca] bg-[#eff1ee]">
        <div className="flex h-20 items-center pl-[39px]">
          <nav className="flex h-full gap-[81px] text-[32px] leading-[40px]">
            {tabs.map((t) => (
              <button key={t} className={t === "绘图" ? "flex h-[77px] items-end border-b-8 border-[#7518a8] pb-2 font-bold" : "flex h-[77px] items-end pb-4"}>
                {t}
              </button>
            ))}
          </nav>
          <TopActions />
        </div>
        <Toolbar />
      </header>
      <div className="flex flex-1">
        <aside className="flex w-[120px] shrink-0 flex-col items-center border-r-2 border-[#dcdddb] pl-[2px] pt-[30px]">
          <button aria-label="笔记本" className="flex h-[50px] w-full items-center justify-center">
            <Icon w={48} h={44}>
              <path d="M2 3H11V41H2ZM15 3H24V41H15ZM26 5L34 3L46 39L38 41Z" strokeWidth="2.500" />
            </Icon>
          </button>
          <button aria-label="搜索" className="mt-[59px] flex h-[50px] w-full items-center justify-center">
            <Icon w={46} h={46}>
              <circle cx="29" cy="17" r="14" />
              <path d="M19 27L3 43" />
            </Icon>
          </button>
          <button aria-label="最近的笔记" className="mt-[61px] flex h-[50px] w-full items-center justify-center">
            <Icon w={46} h={46}>
              <circle cx="23" cy="23" r="21" />
              <path d="M21 11V25H32" />
            </Icon>
          </button>
        </aside>
        <Note />
      </div>
      <Taskbar />
    </div>
  );
}
